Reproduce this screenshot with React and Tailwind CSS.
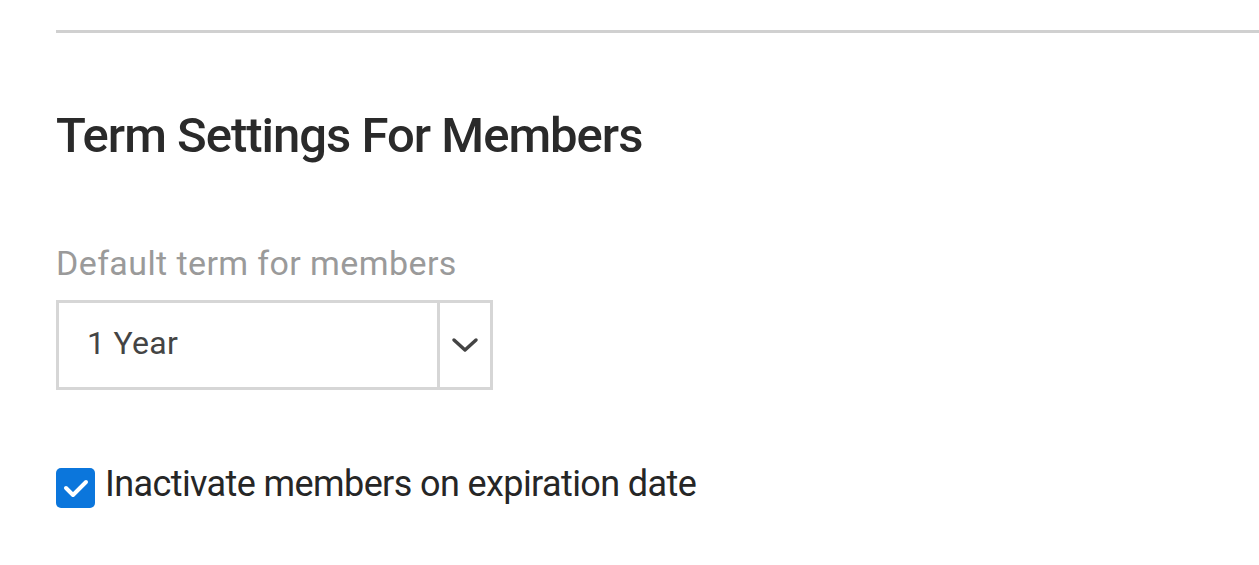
export default function App() {
  return (
    <div className="w-[1259px] h-[565px] bg-white overflow-hidden" style={{ fontFamily: "Roboto, 'Noto Sans', sans-serif" }}>
      <div className="pl-[56px] pt-[30px]">
        <div className="h-[3px] bg-[#d0d0d0]" />
        <h1 className="mt-[74px] text-[49px] leading-[58px] font-medium text-[#2a2a2a] tracking-[-1px]">Term Settings For Members</h1>
        <div className="mt-[79px] text-[34px] leading-[38px] text-[#9a9a9a] tracking-[0.4px]">Default term for members</div>
        <div className="mt-[18px] flex w-[437px] h-[90px] border-[3px] border-[#d6d6d6]">
          <div className="flex-1 flex items-center pl-[28px] pb-[4px] text-[32px] text-[#444444] tracking-[0.3px]">1 Year</div>
          <div className="w-[53px] border-l-[3px] border-[#d6d6d6] flex items-center justify-center">
            <svg width="28" height="18" viewBox="0 0 28 18" fill="none">
              <path d="M3 4 L14 14 L25 4" stroke="#444444" strokeWidth="3.5" strokeLinecap="round" strokeLinejoin="round" />
            </svg>
          </div>
        </div>
        <div className="mt-[78px] flex items-start gap-[10px]">
          <div className="w-[39px] h-[40px] rounded-[5px] bg-[#0b76dc] flex items-center justify-center">
            <svg width="26" height="20" viewBox="0 0 26 20" fill="none">
              <path d="M3 10 L10 17 L23 4" stroke="white" strokeWidth="4" strokeLinecap="round" strokeLinejoin="round" />
            </svg>
          </div>
          <span className="text-[36px] leading-[32px] text-[#262626] tracking-[-0.6px]">Inactivate members on expiration date</span>
        </div>
      </div>
    </div>
  );
}
